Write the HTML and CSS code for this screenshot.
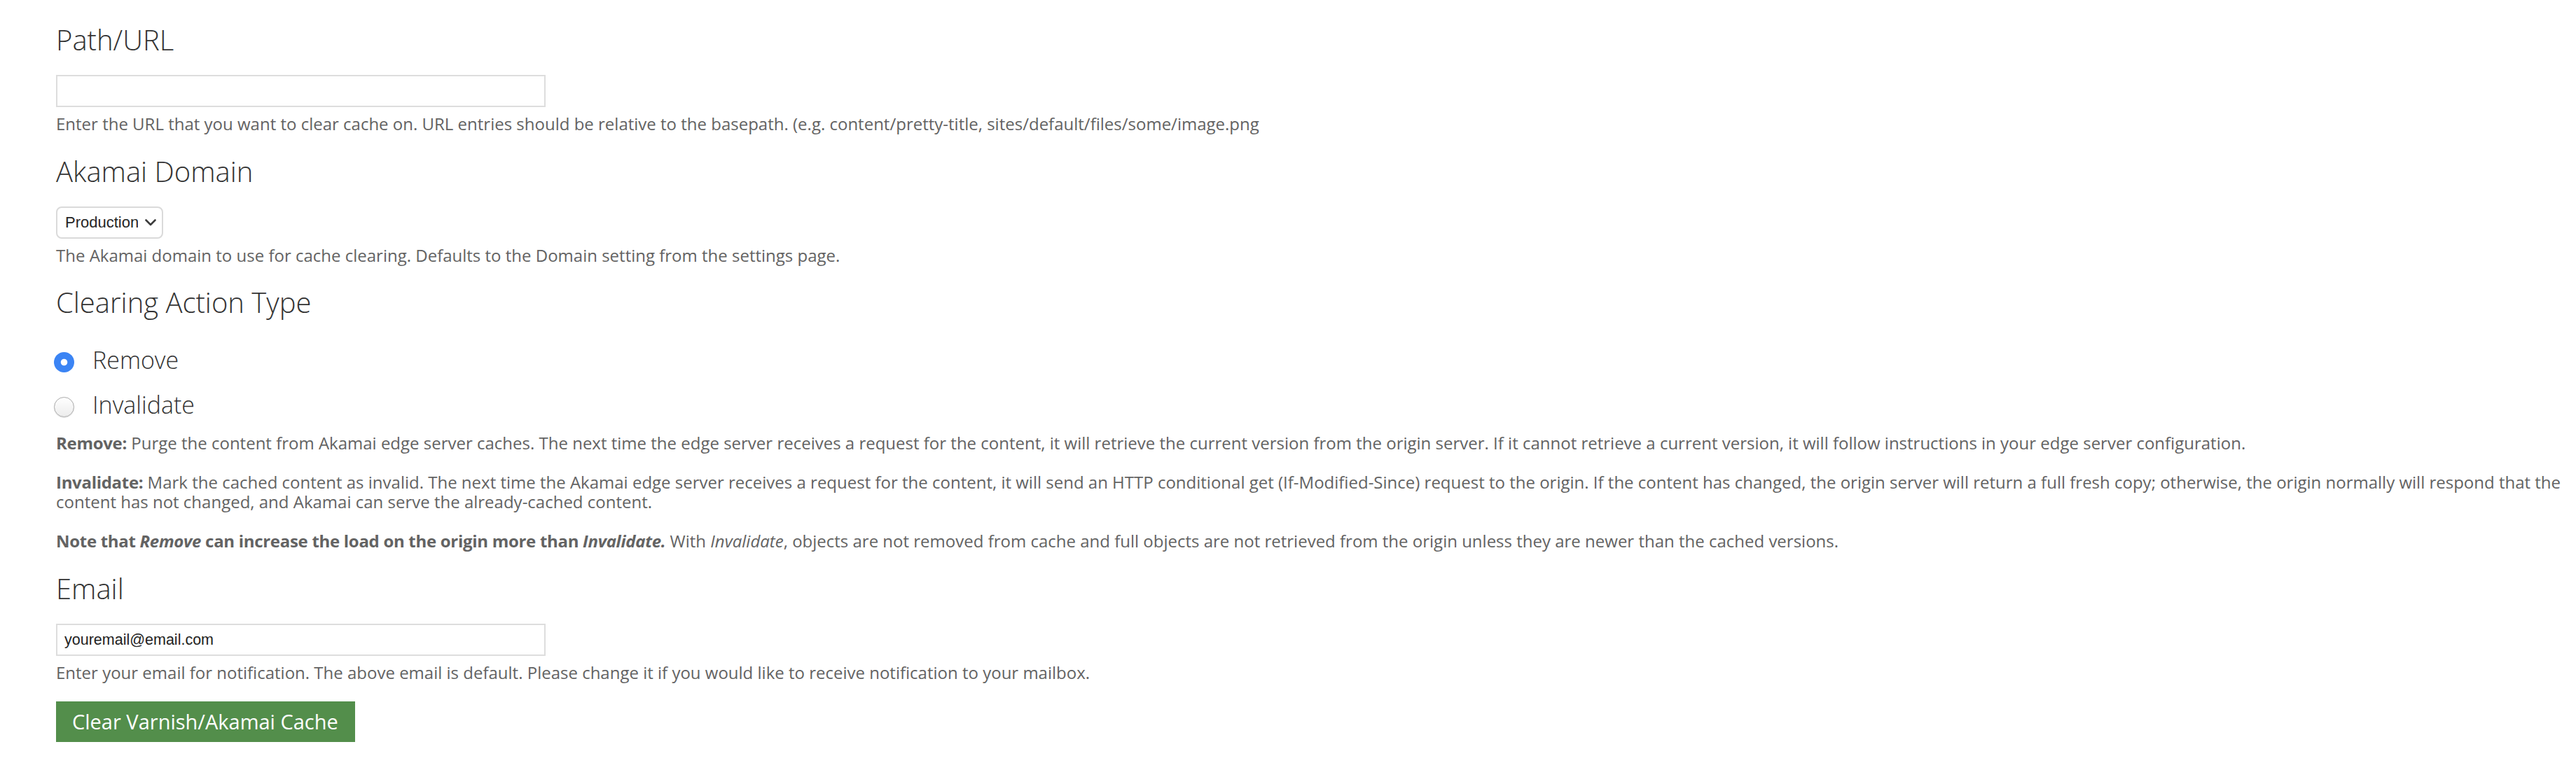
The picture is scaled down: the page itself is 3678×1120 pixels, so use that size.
FILE: index.html
```html
<!DOCTYPE html>
<html lang="en">
<head>
<meta charset="utf-8">
<title>Clear Varnish/Akamai Cache</title>
<link rel="stylesheet" href="styles.css">
</head>
<body>
<div class="page">
  <form class="cache-form">
    <div class="field">
      <h2 class="field-title">Path/URL</h2>
      <input class="text-input" type="text">
      <p class="field-desc">Enter the URL that you want to clear cache on. URL entries should be relative to the basepath. (e.g. content/pretty-title, sites/default/files/some/image.png</p>
    </div>

    <div class="field">
      <h2 class="field-title">Akamai Domain</h2>
      <span class="select-wrap">
        <select class="select">
          <option>Production</option>
        </select>
        <svg class="select-chevron" width="16" height="10" viewBox="0 0 16 10" aria-hidden="true"><polyline points="1.5,1.5 8,8 14.5,1.5" fill="none" stroke="#3c3c3c" stroke-width="2.6" stroke-linecap="round" stroke-linejoin="round"/></svg>
      </span>
      <p class="field-desc">The Akamai domain to use for cache clearing. Defaults to the Domain setting from the settings page.</p>
    </div>

    <div class="field field-radios">
      <h2 class="field-title title-radios">Clearing Action Type</h2>
      <div class="radios">
        <label class="radio-row"><input class="radio" type="radio" name="action" checked><span class="radio-label">Remove</span></label>
        <label class="radio-row"><input class="radio" type="radio" name="action"><span class="radio-label">Invalidate</span></label>
      </div>
      <div class="radio-desc">
        <p class="desc-para"><strong>Remove:</strong> Purge the content from Akamai edge server caches. The next time the edge server receives a request for the content, it will retrieve the current version from the origin server. If it cannot retrieve a current version, it will follow instructions in your edge server configuration.</p>
        <p class="desc-para"><strong>Invalidate:</strong> Mark the cached content as invalid. The next time the Akamai edge server receives a request for the content, it will send an HTTP conditional get (If-Modified-Since) request to the origin. If the content has changed, the origin server will return a full fresh copy; otherwise, the origin normally will respond that the content has not changed, and Akamai can serve the already-cached content.</p>
        <p class="desc-para"><strong>Note that <em>Remove</em> can increase the load on the origin more than <em>Invalidate.</em></strong> With <em>Invalidate</em>, objects are not removed from cache and full objects are not retrieved from the origin unless they are newer than the cached versions.</p>
      </div>
    </div>

    <div class="field field-last">
      <h2 class="field-title">Email</h2>
      <input class="text-input" type="text" value="youremail@email.com">
      <p class="field-desc">Enter your email for notification. The above email is default. Please change it if you would like to receive notification to your mailbox.</p>
    </div>

    <button class="submit" type="button">Clear Varnish/Akamai Cache</button>
  </form>
</div>
</body>
</html>
```

FILE: styles.css
```css
* {
  box-sizing: border-box;
}

html, body {
  margin: 0;
  padding: 0;
  background: #ffffff;
}

body {
  font-family: "Open Sans", "Liberation Sans", sans-serif;
  font-size: 24px;
  line-height: 28px;
  color: #636363;
}

.page {
  padding: 33px 0 40px 80px;
}

.cache-form {
  display: flex;
  flex-direction: column;
  align-items: flex-start;
}

.field {
  display: flex;
  flex-direction: column;
  align-items: flex-start;
  width: 100%;
  margin-bottom: 29.5px;
}

.field-title {
  margin: 0 0 26px 0;
  font-family: "Open Sans", sans-serif;
  font-weight: 300;
  font-size: 40px;
  line-height: 48px;
  color: #333333;
}

.title-radios {
  margin-bottom: 29.5px;
}

.text-input {
  width: 699px;
  height: 46px;
  margin: 0;
  padding: 0 10px;
  border: 2px solid #dddddd;
  border-radius: 0;
  background: #ffffff;
  font-family: "Liberation Sans", Arial, sans-serif;
  font-size: 21.5px;
  color: #222222;
  outline: none;
}

.field-desc {
  margin: 10px 0 0 0;
  font-size: 24px;
  line-height: 28px;
  color: #636363;
}

.select-wrap {
  position: relative;
  display: inline-flex;
}

.select {
  -webkit-appearance: none;
  appearance: none;
  width: 153px;
  height: 46px;
  margin: 0;
  padding: 0 34px 0 11px;
  border: 2px solid #dadada;
  border-radius: 8px;
  background: #ffffff;
  font-family: "Liberation Sans", Arial, sans-serif;
  font-size: 22px;
  color: #262626;
  outline: none;
}

.select-chevron {
  position: absolute;
  right: 10px;
  top: 18px;
  pointer-events: none;
}

.radios {
  display: flex;
  flex-direction: column;
}

.radio-row {
  display: flex;
  align-items: center;
  height: 64px;
}

.radio {
  -webkit-appearance: none;
  appearance: none;
  width: 29px;
  height: 29px;
  margin: 0 26px 0 -3px;
  border-radius: 50%;
  border: 1.5px solid #a9a9a9;
  background: linear-gradient(#ffffff, #ececec);
  box-shadow: 0 1px 1px rgba(0, 0, 0, 0.1);
  flex: none;
}

.radio:checked {
  border: none;
  background: radial-gradient(circle, #ffffff 0 4.3px, #3b84f4 5.2px);
  box-shadow: none;
}

.radio-label {
  font-family: "Open Sans", sans-serif;
  font-weight: 300;
  font-size: 34px;
  line-height: 56px;
  padding-bottom: 8px;
  color: #333333;
}

.radio-desc {
  margin-top: 5px;
  display: flex;
  flex-direction: column;
  gap: 28px;
}

.desc-para {
  margin: 0;
  font-size: 24px;
  line-height: 28px;
  color: #636363;
}

.desc-para strong {
  font-weight: 700;
  letter-spacing: -0.3px;
}

.field-radios {
  margin-bottom: 30.5px;
}

.field-last {
  margin-bottom: 27px;
}

.submit {
  height: 58px;
  margin: 0;
  padding: 0 24px 0 23px;
  border: none;
  border-radius: 0;
  background: #538e4b;
  color: #ffffff;
  font-family: "Open Sans", sans-serif;
  font-weight: 400;
  font-size: 29px;
  line-height: 58px;
  cursor: pointer;
}
```
